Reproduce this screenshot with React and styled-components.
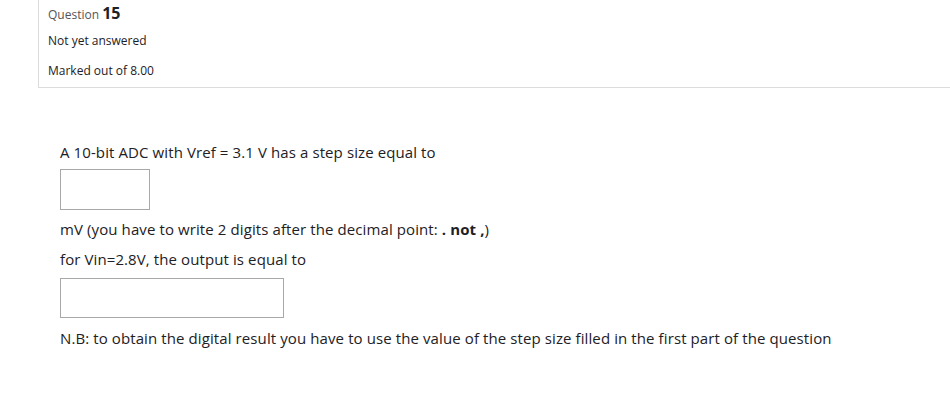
import React from "react";
import styled, { createGlobalStyle } from "styled-components";

const GlobalStyle = createGlobalStyle`
  body {
    margin: 0;
    background: #ffffff;
    font-family: "Open Sans", "Noto Sans", sans-serif;
    color: #1d2125;
  }
`;

const Page = styled.div`
  width: 950px;
  height: 412px;
  overflow: hidden;
`;

const Info = styled.div`
  margin-left: 38px;
  border: 1px solid #dcdcdc;
  border-top: none;
  border-right: none;
  padding: 3px 9px 0;
  height: 84px;
  box-sizing: border-box;
  height: 88px;
`;

const QNumber = styled.div`
  font-size: 12px;
  color: #555;
  line-height: 20px;
  height: 22px;
  b {
    font-size: 16px;
    color: #1d2125;
    font-weight: 700;
  }
`;

const State = styled.div`
  font-size: 12px;
  line-height: 16px;
  padding: 8px 0 6px;
`;

const Content = styled.div`
  padding: 54px 0 0 60px;
`;

const Text = styled.div`
  font-size: 15px;
  line-height: 20px;
  letter-spacing: 0.1px;
  margin-top: ${(p) => p.$mt || 0}px;
  b {
    font-weight: 700;
  }
`;

const Answer = styled.input`
  display: block;
  box-sizing: border-box;
  width: ${(p) => p.$w}px;
  height: ${(p) => p.$h}px;
  border: 1px solid #a8a8a8;
  margin: ${(p) => p.$mt}px 0 0;
  padding: 0;
  background: #fff;
`;

export default function App() {
  return (
    <Page>
      <GlobalStyle />
      <Info>
        <QNumber>
          Question <b>15</b>
        </QNumber>
        <State>Not yet answered</State>
        <State>Marked out of 8.00</State>
      </Info>
      <Content>
        <Text>A 10-bit ADC with Vref = 3.1 V has a step size equal to</Text>
        <Answer $w={90} $h={41} $mt={7} />
        <Text $mt={9}>
          mV (you have to write 2 digits after the decimal point: <b>. not ,</b>)
        </Text>
        <Text $mt={10}>for Vin=2.8V, the output is equal to</Text>
        <Answer $w={224} $h={40} $mt={9} />
        <Text $mt={10}>
          N.B: to obtain the digital result you have to use the value of the step size filled in the first part of the question
        </Text>
      </Content>
    </Page>
  );
}
